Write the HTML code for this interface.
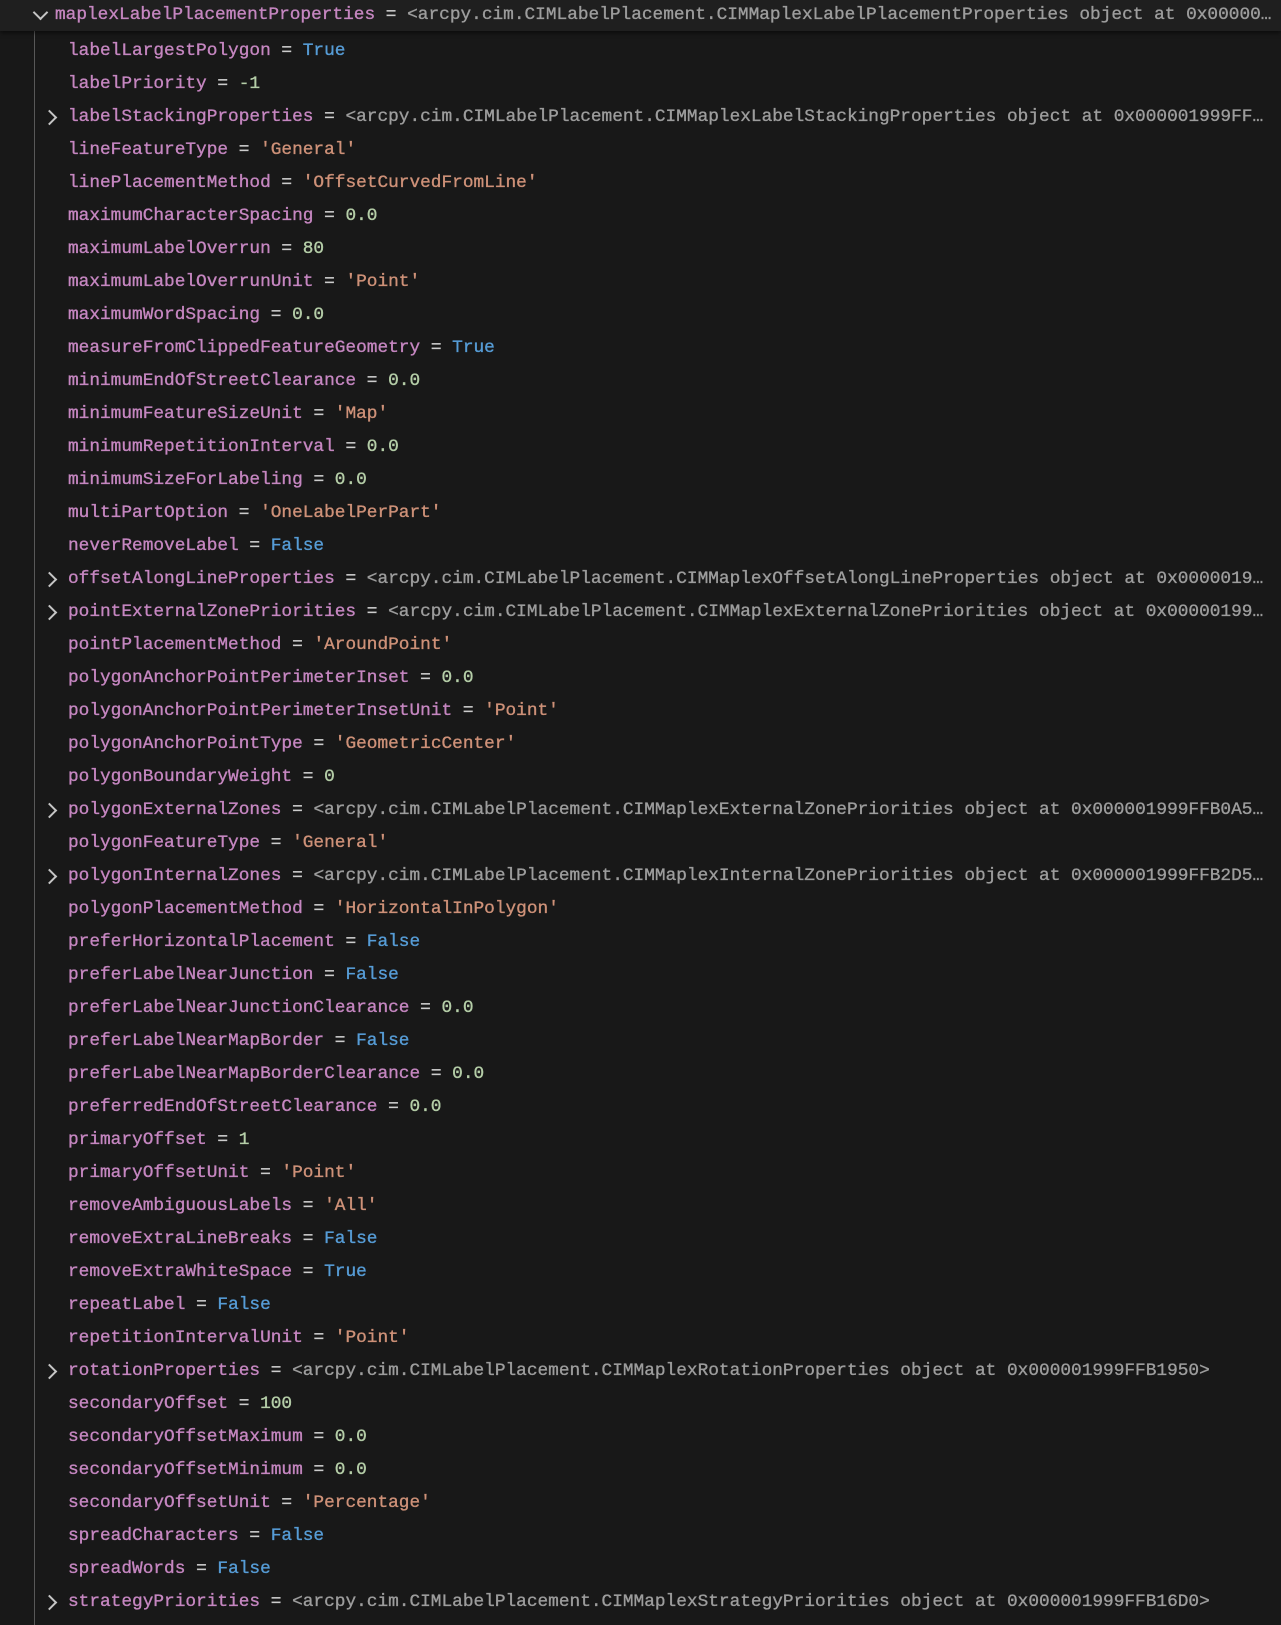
<!DOCTYPE html>
<html><head><meta charset="utf-8"><style>
html,body{margin:0;padding:0;background:#181818;width:1281px;height:1625px;overflow:hidden}
body{font-family:"Liberation Mono",monospace;font-size:17.8px;position:relative;-webkit-text-stroke:0.35px currentColor}
.hdr{position:absolute;left:0;top:0;width:1281px;height:31px;background:#1f1f1f;box-shadow:0 2px 4px rgba(0,0,0,.5);z-index:2}
.guide{position:absolute;left:34px;top:31px;width:1px;height:1594px;background:#585858}
.row{position:absolute;left:68px;width:1200px;height:33px;line-height:33px;white-space:nowrap;overflow:hidden;text-overflow:ellipsis;color:#9d9d9d}
.hdr .row{left:55px;top:0px;width:1220px;line-height:31px;height:31px}
.k{color:#c586c0}.o{color:#cccccc}.b{color:#569cd6}.n{color:#b5cea8}.s{color:#ce9178}.g{color:#9d9d9d}
.chev{position:absolute;width:9px;height:9px;border-right:2px solid #c5c5c5;border-bottom:2px solid #c5c5c5}
.cr{left:44px;transform:rotate(-45deg)}
.cd{left:35px;top:7px;transform:rotate(45deg)}
</style></head><body>
<div class="hdr"><div class="chev cd"></div><div class="row"><span class="k">maplexLabelPlacementProperties</span> <span class="o">=</span> <span class="g">&lt;arcpy.cim.CIMLabelPlacement.CIMMaplexLabelPlacementProperties object at 0x000001999FFB0A50&gt;</span></div></div>
<div class="guide"></div>
<div id="rows"></div>
<script>
var R=[
["labelLargestPolygon","b","True"],
["labelPriority","n","-1"],
["labelStackingProperties","g","<arcpy.cim.CIMLabelPlacement.CIMMaplexLabelStackingProperties object at 0x000001999FFB1234>",1],
["lineFeatureType","s","'General'"],
["linePlacementMethod","s","'OffsetCurvedFromLine'"],
["maximumCharacterSpacing","n","0.0"],
["maximumLabelOverrun","n","80"],
["maximumLabelOverrunUnit","s","'Point'"],
["maximumWordSpacing","n","0.0"],
["measureFromClippedFeatureGeometry","b","True"],
["minimumEndOfStreetClearance","n","0.0"],
["minimumFeatureSizeUnit","s","'Map'"],
["minimumRepetitionInterval","n","0.0"],
["minimumSizeForLabeling","n","0.0"],
["multiPartOption","s","'OneLabelPerPart'"],
["neverRemoveLabel","b","False"],
["offsetAlongLineProperties","g","<arcpy.cim.CIMLabelPlacement.CIMMaplexOffsetAlongLineProperties object at 0x000001999FFB1234>",1],
["pointExternalZonePriorities","g","<arcpy.cim.CIMLabelPlacement.CIMMaplexExternalZonePriorities object at 0x000001999FFB1234>",1],
["pointPlacementMethod","s","'AroundPoint'"],
["polygonAnchorPointPerimeterInset","n","0.0"],
["polygonAnchorPointPerimeterInsetUnit","s","'Point'"],
["polygonAnchorPointType","s","'GeometricCenter'"],
["polygonBoundaryWeight","n","0"],
["polygonExternalZones","g","<arcpy.cim.CIMLabelPlacement.CIMMaplexExternalZonePriorities object at 0x000001999FFB0A50>",1],
["polygonFeatureType","s","'General'"],
["polygonInternalZones","g","<arcpy.cim.CIMLabelPlacement.CIMMaplexInternalZonePriorities object at 0x000001999FFB2D50>",1],
["polygonPlacementMethod","s","'HorizontalInPolygon'"],
["preferHorizontalPlacement","b","False"],
["preferLabelNearJunction","b","False"],
["preferLabelNearJunctionClearance","n","0.0"],
["preferLabelNearMapBorder","b","False"],
["preferLabelNearMapBorderClearance","n","0.0"],
["preferredEndOfStreetClearance","n","0.0"],
["primaryOffset","n","1"],
["primaryOffsetUnit","s","'Point'"],
["removeAmbiguousLabels","s","'All'"],
["removeExtraLineBreaks","b","False"],
["removeExtraWhiteSpace","b","True"],
["repeatLabel","b","False"],
["repetitionIntervalUnit","s","'Point'"],
["rotationProperties","g","<arcpy.cim.CIMLabelPlacement.CIMMaplexRotationProperties object at 0x000001999FFB1950>",1],
["secondaryOffset","n","100"],
["secondaryOffsetMaximum","n","0.0"],
["secondaryOffsetMinimum","n","0.0"],
["secondaryOffsetUnit","s","'Percentage'"],
["spreadCharacters","b","False"],
["spreadWords","b","False"],
["strategyPriorities","g","<arcpy.cim.CIMLabelPlacement.CIMMaplexStrategyPriorities object at 0x000001999FFB16D0>",1]
];
var h="";
function esc(t){return t.replace(/&/g,"&amp;").replace(/</g,"&lt;").replace(/>/g,"&gt;");}
for(var i=0;i<R.length;i++){var t=34.5+i*33;var r=R[i];
if(r[3])h+='<div class="chev cr" style="top:'+(t+11)+'px"></div>';
h+='<div class="row" style="top:'+t+'px"><span class="k">'+r[0]+'</span> <span class="o">=</span> <span class="'+r[1]+'">'+esc(r[2])+'</span></div>';}
document.getElementById("rows").innerHTML=h;
</script>
</body></html>
